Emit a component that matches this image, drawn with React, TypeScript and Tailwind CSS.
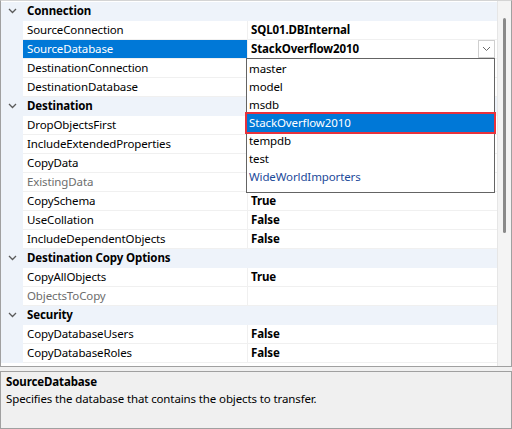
import React from "react";

type Row =
  | { kind: "cat"; label: string }
  | { kind: "prop"; name: string; value?: string; dim?: boolean; selected?: boolean; combo?: boolean };

const rows: Row[] = [
  { kind: "cat", label: "Connection" },
  { kind: "prop", name: "SourceConnection", value: "SQL01.DBInternal" },
  { kind: "prop", name: "SourceDatabase", value: "StackOverflow2010", selected: true, combo: true },
  { kind: "prop", name: "DestinationConnection" },
  { kind: "prop", name: "DestinationDatabase" },
  { kind: "cat", label: "Destination" },
  { kind: "prop", name: "DropObjectsFirst" },
  { kind: "prop", name: "IncludeExtendedProperties" },
  { kind: "prop", name: "CopyData" },
  { kind: "prop", name: "ExistingData", dim: true },
  { kind: "prop", name: "CopySchema", value: "True" },
  { kind: "prop", name: "UseCollation", value: "False" },
  { kind: "prop", name: "IncludeDependentObjects", value: "False" },
  { kind: "cat", label: "Destination Copy Options" },
  { kind: "prop", name: "CopyAllObjects", value: "True" },
  { kind: "prop", name: "ObjectsToCopy", dim: true },
  { kind: "cat", label: "Security" },
  { kind: "prop", name: "CopyDatabaseUsers", value: "False" },
  { kind: "prop", name: "CopyDatabaseRoles", value: "False" },
];

const items = ["master", "model", "msdb", "StackOverflow2010", "tempdb", "test", "WideWorldImporters"];

function Chevron() {
  return (
    <svg width="9" height="6" viewBox="0 0 9 6" className="block">
      <path d="M1 1 L4.5 4.5 L8 1" fill="none" stroke="#5a5a5a" strokeWidth="1.3" />
    </svg>
  );
}

export default function App() {
  return (
    <div className="w-[512px] h-[429px] bg-[#f0f0f0] flex flex-col overflow-hidden font-['Noto_Sans',sans-serif] text-[11.5px] tracking-[-0.12px] text-[#000] leading-[18px]">
      {/* grid panel */}
      <div className="h-[367px] shrink-0 flex border-t border-t-[#d4d4d4] border-l border-l-[#a0a0a0] border-b border-b-[#a0a0a0] border-r border-r-[#a0a0a0] bg-white">
        <div className="relative flex-1 flex flex-col pt-px overflow-hidden">
          {rows.map((r, i) =>
            r.kind === "cat" ? (
              <div key={i} className="h-[19px] shrink-0 flex items-start bg-[#eef3fa] border-b border-b-[#eef3fa]">
                <div className="w-[22px] h-[18px] flex items-center justify-center pl-[1px]">
                  <Chevron />
                </div>
                <div className="pl-[4px] font-bold">{r.label}</div>
              </div>
            ) : (
              <div key={i} className="h-[19px] shrink-0 flex items-start border-b border-b-[#f0f0f0]">
                <div className="w-[22px] h-[19px] bg-[#eef3fa] shrink-0" />
                <div
                  className={
                    "w-[224px] h-[18px] shrink-0 pl-[4px] whitespace-nowrap overflow-hidden " +
                    (r.selected ? "bg-[#0078d7] text-white" : r.dim ? "text-[#6d6d6d]" : "")
                  }
                >
                  {r.name}
                </div>
                <div className="w-px h-[19px] bg-[#f0f0f0] shrink-0" />
                <div className="relative flex-1 h-[18px] pl-[3px] font-bold whitespace-nowrap">
                  {r.value}
                  {r.combo && (
                    <div className="absolute right-[2px] top-0 w-[17px] h-[18px] border border-[#cfcfcf] bg-white flex items-center justify-center">
                      <svg width="9" height="6" viewBox="0 0 9 6" className="block">
                        <path d="M1 1 L4.5 4.5 L8 1" fill="none" stroke="#6a6a6a" strokeWidth="1" />
                      </svg>
                    </div>
                  )}
                </div>
              </div>
            )
          )}
          {/* dropdown list */}
          <div className="absolute left-[245px] top-[57px] w-[249px] h-[135px] border border-[#646464] bg-white pt-[1px]">
            {items.map((it, i) => (
              <div
                key={it}
                className={
                  "h-[18px] pl-[2px] whitespace-nowrap " +
                  (i === 3
                    ? "bg-[#0078d7] text-white outline-2 outline-[#e8323c]"
                    : i === 6
                    ? "text-[#1c4a9a]"
                    : "")
                }
              >
                {it}
              </div>
            ))}
          </div>
        </div>
        {/* scrollbar */}
        <div className="w-[14px] shrink-0 bg-[#f4f4f4] border-l border-l-[#e6e6e6] flex justify-center pt-[17px]">
          <div className="w-[3px] h-[215px] rounded-full bg-[#8a8a8a]" />
        </div>
      </div>
      <div className="h-[4px] shrink-0" />
      {/* description */}
      <div className="flex-1 border border-[#a0a0a0] bg-[#f0f0f0] px-[5px] pt-[1px] leading-[17px]">
        <div className="font-bold">SourceDatabase</div>
        <div>Specifies the database that contains the objects to transfer.</div>
      </div>
    </div>
  );
}
